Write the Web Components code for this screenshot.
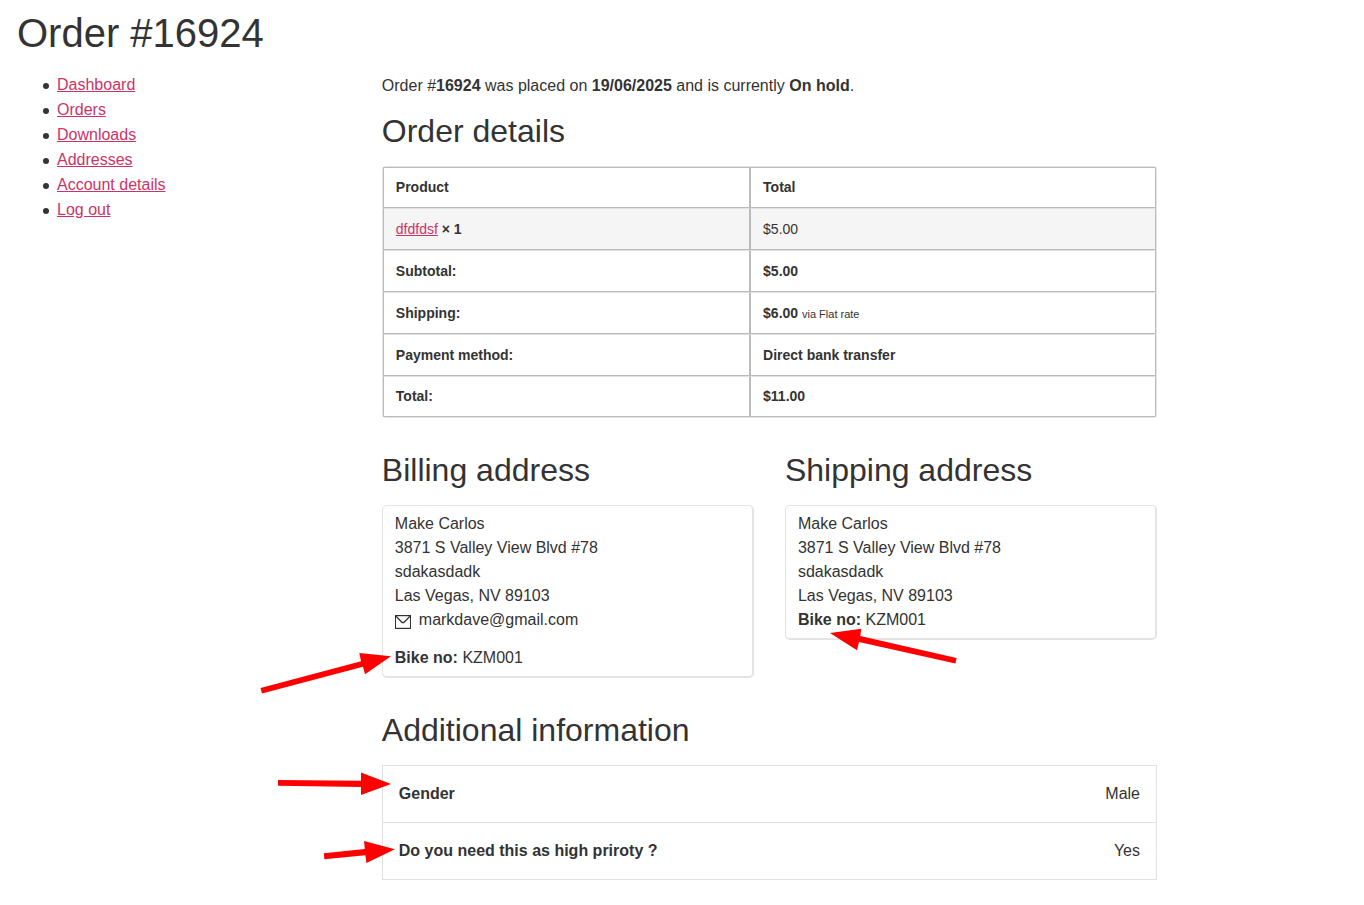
<!DOCTYPE html>
<html lang="en">
<head>
<meta charset="utf-8">
<meta name="viewport" content="width=device-width, initial-scale=1">
<title>Order #16924</title>
<style>
  body { margin: 0; background: #fff; color: #333; font: 16px/24px "Liberation Sans", Arial, sans-serif; }
</style>
</head>
<body>
<account-page>
  <h1 slot="title">Order #16924</h1>
  <account-nav slot="nav"></account-nav>
  <order-summary></order-summary>
  <page-section heading="Order details"><order-table></order-table></page-section>
  <address-columns>
    <page-section heading="Billing address">
      <address-card>
        Make Carlos<br>3871 S Valley View Blvd #78<br>sdakasdadk<br>Las Vegas, NV 89103
        <email-line slot="email">markdave@gmail.com</email-line>
        <span slot="extra"><strong>Bike no:</strong> KZM001</span>
      </address-card>
    </page-section>
    <page-section heading="Shipping address">
      <address-card>
        Make Carlos<br>3871 S Valley View Blvd #78<br>sdakasdadk<br>Las Vegas, NV 89103
        <span slot="extra"><strong>Bike no:</strong> KZM001</span>
      </address-card>
    </page-section>
  </address-columns>
  <page-section heading="Additional information"><info-table></info-table></page-section>
  <arrow-notes slot="notes"></arrow-notes>
</account-page>

<script>
const define = (name, html) => {
  const template = document.createElement('template');
  template.innerHTML = html;
  customElements.define(name, class extends HTMLElement {
    constructor() {
      super();
      this.attachShadow({ mode: 'open' }).append(template.content.cloneNode(true));
    }
    connectedCallback() {
      const heading = this.shadowRoot.querySelector('[data-heading]');
      if (heading) heading.textContent = this.getAttribute('heading');
    }
  });
};

define('account-page', `
  <style>
    :host { display: block; position: relative; padding: 9px 17px 24px; }
    .page { max-width: 1140px; }
    ::slotted(h1) { margin: 0 0 15px; font-size: 40px; line-height: 48px; font-weight: 400; }
    .columns { display: grid; grid-template-columns: 30% 68%; justify-content: space-between; align-items: start; }
    main { display: flex; flex-direction: column; min-width: 0; }
  </style>
  <div class="page">
    <slot name="title"></slot>
    <div class="columns">
      <slot name="nav"></slot>
      <main><slot></slot></main>
    </div>
  </div>
  <slot name="notes"></slot>`);

define('account-nav', `
  <style>
    :host { display: block; }
    ul { margin: 0; padding: 0 0 0 26px; line-height: 25px; list-style: none; }
    li { display: flex; align-items: center; gap: 8px; }
    li::before { content: ""; width: 6px; height: 6px; margin-top: 2px; border-radius: 50%; background: #333; }
    a { color: #cc3366; text-decoration: underline; }
  </style>
  <nav aria-label="Account pages">
    <ul>
      <li><a href="#dashboard">Dashboard</a></li>
      <li><a href="#orders">Orders</a></li>
      <li><a href="#downloads">Downloads</a></li>
      <li><a href="#addresses">Addresses</a></li>
      <li><a href="#account">Account details</a></li>
      <li><a href="#logout">Log out</a></li>
    </ul>
  </nav>`);

define('order-summary', `
  <style>
    :host { display: block; padding-top: 2px; margin-bottom: 14px; }
    p { margin: 0; }
  </style>
  <p>Order #<strong>16924</strong> was placed on <strong>19/06/2025</strong> and is currently <strong>On hold</strong>.</p>`);

define('page-section', `
  <style>
    :host { display: block; margin-bottom: 33px; }
    h2 { margin: 0 0 16px; font-size: 32px; line-height: 38px; font-weight: 400; }
  </style>
  <section><h2 data-heading></h2><slot></slot></section>`);

define('order-table', `
  <style>
    :host { display: block; }
    table { width: 100%; table-layout: fixed; border-collapse: separate; border-spacing: 0;
      border: 1px solid #e4e4e4; border-radius: 4px; font-size: 14px; line-height: 22px; text-align: left; }
    th, td { padding: 9px 12px; border: 1px solid #bbb; }
    th:first-child, td:first-child { width: 47.5%; box-sizing: border-box; }
    tbody > tr > *, tfoot > tr > * { border-top-color: #e1e1e1; }
    thead tr, tfoot tr:last-child { line-height: 21px; }
    tbody tr { background: #f5f5f5; }
    tfoot td { font-weight: 700; }
    small { font-size: 11px; font-weight: 400; line-height: 16px; }
    a { color: #cc3366; }
  </style>
  <table>
    <thead><tr><th scope="col">Product</th><th scope="col">Total</th></tr></thead>
    <tbody><tr><td><a href="#product">dfdfdsf</a> <strong>× 1</strong></td><td>$5.00</td></tr></tbody>
    <tfoot>
      <tr><th scope="row">Subtotal:</th><td>$5.00</td></tr>
      <tr><th scope="row">Shipping:</th><td>$6.00 <small>via Flat rate</small></td></tr>
      <tr><th scope="row">Payment method:</th><td>Direct bank transfer</td></tr>
      <tr><th scope="row">Total:</th><td>$11.00</td></tr>
    </tfoot>
  </table>`);

define('address-columns', `
  <style>
    :host { display: grid; grid-template-columns: 48% 48%; justify-content: space-between; align-items: start; }
  </style>
  <slot></slot>`);

define('address-card', `
  <style>
    :host { display: block; }
    address { padding: 6px 12px; border: 1px solid #e4e4e4; border-right-width: 2px; border-bottom-width: 2px;
      border-radius: 5px; font-style: normal; }
    ::slotted([slot="extra"]) { display: block; }
  </style>
  <address><slot></slot><slot name="email"></slot><slot name="extra"></slot></address>`);

define('email-line', `
  <style>
    :host { display: flex; gap: 8px; margin-bottom: 14px; }
    svg { flex: none; width: 16px; height: 24px; }
  </style>
  <svg viewBox="0 0 16 24" fill="none" stroke="#333" stroke-width="1.2" aria-hidden="true">
    <rect x=".4" y="7.6" width="15.2" height="12.8"/>
    <path d="M.8 8l5.8 6q1.4 1.4 2.8 0L15.2 8"/>
  </svg>
  <span><slot></slot></span>`);

define('info-table', `
  <style>
    :host { display: block; }
    table { width: 100%; border-collapse: collapse; border: 1px solid #e1e1e1; }
    tr + tr { border-top: 1px solid #e1e1e1; }
    th, td { padding: 16px; }
    th { text-align: left; }
    td { text-align: right; }
  </style>
  <table>
    <tr><th scope="row">Gender</th><td>Male</td></tr>
    <tr><th scope="row">Do you need this as high priroty ?</th><td>Yes</td></tr>
  </table>`);

/* Red pointer arrows drawn freely over the page. */
define('arrow-notes', `
  <style>
    :host { position: absolute; top: 0; left: 0; pointer-events: none; }
    svg { display: block; overflow: visible; }
  </style>
  <svg width="960" height="870" viewBox="0 0 960 870" fill="#f00" aria-hidden="true">
    <path d="M260.5 688L361 661.3L359.3 653L391 656.2L365 674.3L363 666.8L262 693.5Z"/>
    <path d="M830 633L861.3 628.7L860.3 636L956.6 658L955.4 663.5L859 642L857 650.3Z"/>
    <path d="M278 780L361 780.8V772.5L391 784L361 795V787L278 785.8Z"/>
    <path d="M323.8 853.3L364.8 849L364 841L395 849.3L366.4 863L365.4 855.2L324.4 859.2Z"/>
  </svg>`);
</script>
</body>
</html>
